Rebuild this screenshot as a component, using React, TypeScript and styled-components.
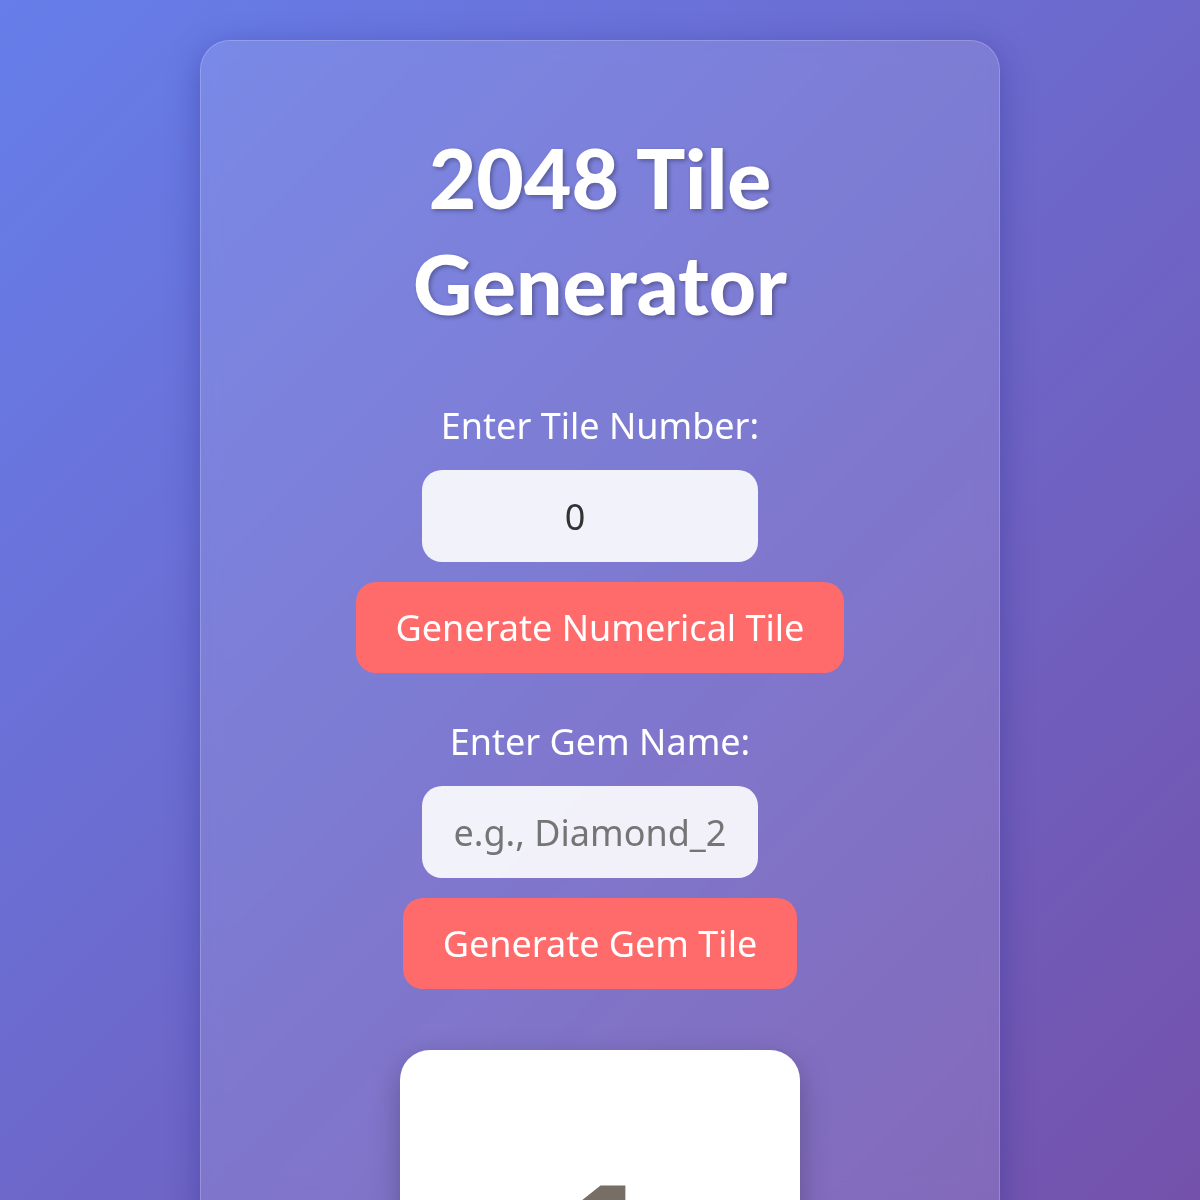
import React from "react";
import styled, { createGlobalStyle } from "styled-components";

const GlobalStyle = createGlobalStyle`
  html, body {
    margin: 0;
    padding: 0;
  }
  body {
    min-height: 100vh;
    padding: 40px 20px;
    box-sizing: border-box;
    background: linear-gradient(135deg, #667eea 0%, #764ba2 100%);
    font-family: "Noto Sans", "Open Sans", sans-serif;
    color: #ffffff;
  }
`;

const Card = styled.main`
  max-width: 800px;
  margin: 0 auto;
  box-sizing: border-box;
  padding: 40px 40px 60px;
  border-radius: 30px;
  background: rgba(255, 255, 255, 0.12);
  border: 1px solid rgba(255, 255, 255, 0.2);
  box-shadow: 0 8px 32px rgba(31, 38, 135, 0.37);
  backdrop-filter: blur(10px);
  display: flex;
  flex-direction: column;
  align-items: center;
  text-align: center;
`;

const Title = styled.h1`
  max-width: 640px;
  margin: 43px 0 65px;
  font-family: Lato, "Noto Sans", sans-serif;
  font-size: 82px;
  line-height: 106px;
  font-weight: 900;
  color: #ffffff;
  text-shadow: 2px 2px 4px rgba(0, 0, 0, 0.3);
`;

const Section = styled.section<{ $gapAfter: number }>`
  display: flex;
  flex-direction: column;
  align-items: center;
  gap: 20px;
  margin-bottom: ${(p) => p.$gapAfter}px;
`;

const Label = styled.label`
  font-size: 36px;
  line-height: 49px;
  color: #ffffff;
`;

const Field = styled.input<{ $offset?: number }>`
  width: 336px;
  height: 92px;
  margin-right: 20px;
  box-sizing: border-box;
  border: none;
  outline: none;
  border-radius: 20px;
  background: rgba(255, 255, 255, 0.9);
  font-family: "Noto Sans", "Open Sans", sans-serif;
  font-size: 36px;
  color: #333333;
  text-align: center;
  padding: 0 ${(p) => (p.$offset ? 15 + p.$offset : 15)}px 0 15px;
  -moz-appearance: textfield;
  &::-webkit-inner-spin-button,
  &::-webkit-outer-spin-button {
    -webkit-appearance: none;
    margin: 0;
  }
  &::placeholder {
    color: #757575;
  }
`;

const ActionButton = styled.button`
  height: 91px;
  padding: 0 40px;
  border: none;
  border-radius: 20px;
  background: #ff6b6b;
  color: #ffffff;
  font-family: "Noto Sans", "Open Sans", sans-serif;
  font-size: 36px;
  cursor: pointer;
`;

const Tile = styled.div`
  width: 400px;
  height: 400px;
  border-radius: 30px;
  background: #ffffff;
  box-shadow: 0 10px 30px rgba(0, 0, 0, 0.25);
  display: flex;
  align-items: center;
  justify-content: center;
  font-size: 200px;
  font-weight: 700;
  color: #776e65;
`;

export default function App() {
  return (
    <>
      <GlobalStyle />
      <Card>
        <Title>2048 Tile Generator</Title>
        <Section $gapAfter={44}>
          <Label htmlFor="num">Enter Tile Number:</Label>
          <Field id="num" type="number" defaultValue="0" $offset={30} />
          <ActionButton>Generate Numerical Tile</ActionButton>
        </Section>
        <Section $gapAfter={61}>
          <Label htmlFor="gem">Enter Gem Name:</Label>
          <Field id="gem" type="text" placeholder="e.g., Diamond_2" />
          <ActionButton>Generate Gem Tile</ActionButton>
        </Section>
        <Tile>1</Tile>
      </Card>
    </>
  );
}
